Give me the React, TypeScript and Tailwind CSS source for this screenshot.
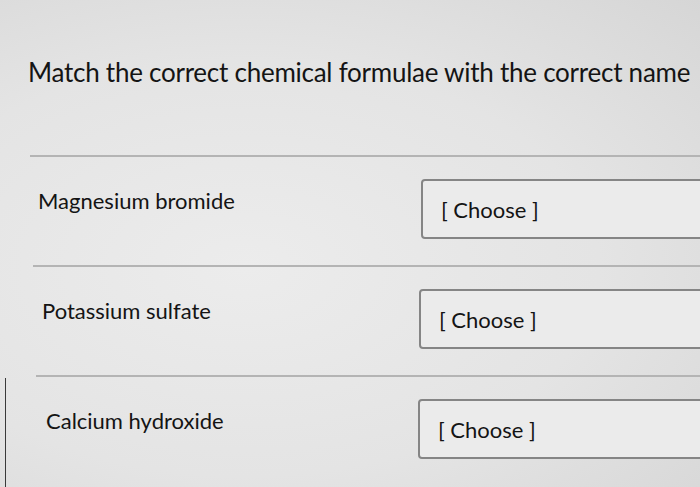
import React from "react";

const rows = [
  { label: "Magnesium bromide", line: "ml-[30px]", lab: "pl-[8px]" },
  { label: "Potassium sulfate", line: "ml-[33px]", lab: "pl-[9px]" },
  { label: "Calcium hydroxide", line: "ml-[36px]", lab: "pl-[10px]" },
];

export default function App() {
  return (
    <div
      className="relative w-[700px] h-[487px] overflow-hidden bg-[radial-gradient(ellipse_at_35%_55%,#ececec_0%,#e4e4e4_55%,#d6d6d6_100%)] text-[#141414]"
      style={{ fontFamily: "Lato, 'Open Sans', sans-serif" }}
    >
      <div className="pl-[28px] pt-[57px] text-[26px] leading-[31px] whitespace-nowrap tracking-[-0.25px]">
        Match the correct chemical formulae with the correct name
      </div>
      <div className="mt-[67px] flex flex-col">
        {rows.map((r, i) => (
          <div key={i} className={`${r.line} border-t-2 border-[#b4b4b4] pt-[22px] pb-[26px]`}>
            <div className="relative flex items-start">
              <div className={`${r.lab} pt-[9px] text-[22px] leading-[26px] whitespace-nowrap`}>{r.label}</div>
              <div
                className="absolute top-0 h-[60px] w-[400px] rounded-[4px] border-2 border-[#858585] bg-[#ebebeb] flex items-center pl-[18px] text-[22px] whitespace-nowrap"
                style={{ left: [391, 386, 382][i] }}
              >
                [ Choose ]
              </div>
              <div className="h-[60px]" />
            </div>
          </div>
        ))}
      </div>
      <div className="absolute left-[5px] top-[378px] h-[120px] w-[1px] bg-[#3a3a3a]" />
    </div>
  );
}
